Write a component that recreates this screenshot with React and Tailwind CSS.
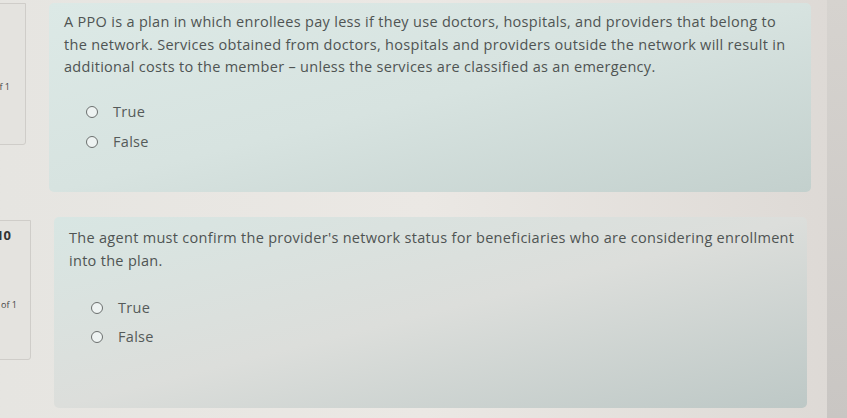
export default function App() {
  const font = { fontFamily: '"Open Sans", "Liberation Sans", sans-serif' };
  const Radio = ({ label }) => (
    <div className="flex items-center h-[30px]">
      <span className="w-[12px] h-[12px] rounded-full border-[1.5px] border-[#6b6f6e] bg-[#eef3f2]" />
      <span className="ml-[15px] text-[14.5px] tracking-[0.3px] text-[#555a59]">{label}</span>
    </div>
  );
  return (
    <div
      className="w-[847px] h-[418px] overflow-hidden relative bg-gradient-to-r from-[#e6e5e1] via-[#ebe8e4] to-[#ddd9d5]"
      style={font}
    >
      <div className="flex flex-col pt-[3px] gap-[25px]">
        {/* Question 9 */}
        <div className="flex items-start">
          <div className="w-[27px] h-[142px] ml-[-1px] border border-[#cfcdc9] bg-[#e4e3df] rounded-br-[3px] flex flex-col">
            <div className="h-[76px]" />
            <div className="text-[9px] text-[#444] -ml-[6px]">of 1</div>
          </div>
          <div className="ml-[23px] w-[762px] h-[189px] rounded-[5px] bg-gradient-to-br from-[#dce9e6] via-[#d7e3e0] to-[#c3d0cd] pl-[15px] pt-[8px]">
            <p className="text-[14.5px] tracking-[0.3px] leading-[22.5px] text-[#4f5453] whitespace-nowrap">
              A PPO is a plan in which enrollees pay less if they use doctors, hospitals, and providers that belong to<br />
              the network. Services obtained from doctors, hospitals and providers outside the network will result in<br />
              additional costs to the member – unless the services are classified as an emergency.
            </p>
            <div className="mt-[18px] ml-[22px] flex flex-col">
              <Radio label="True" />
              <Radio label="False" />
            </div>
          </div>
        </div>
        {/* Question 10 */}
        <div className="flex items-start">
          <div className="w-[32px] h-[140px] ml-[-1px] mt-[3px] border border-[#cfcdc9] bg-[#e4e3df] rounded-br-[3px] flex flex-col">
            <div className="text-[13px] font-bold text-[#333] leading-none mt-[8px] -ml-[4px]">10</div>
            <div className="text-[9px] text-[#444] mt-[56px] ml-[1px]">of 1</div>
          </div>
          <div className="ml-[23px] w-[753px] h-[191px] rounded-[5px] bg-gradient-to-br from-[#d8e6e3] via-[#dcdedb] to-[#bdc8c6] pl-[15px] pt-[9px]">
            <p className="text-[14.5px] tracking-[0.3px] leading-[23px] text-[#4f5453] whitespace-nowrap">
              The agent must confirm the provider's network status for beneficiaries who are considering enrollment<br />
              into the plan.
            </p>
            <div className="mt-[21px] ml-[22px] flex flex-col">
              <div className="h-[29px] flex items-center">
                <span className="w-[12px] h-[12px] rounded-full border-[1.5px] border-[#6b6f6e] bg-[#eef3f2]" />
                <span className="ml-[15px] text-[14.5px] tracking-[0.3px] text-[#555a59]">True</span>
              </div>
              <div className="h-[29px] flex items-center">
                <span className="w-[12px] h-[12px] rounded-full border-[1.5px] border-[#6b6f6e] bg-[#eef3f2]" />
                <span className="ml-[15px] text-[14.5px] tracking-[0.3px] text-[#555a59]">False</span>
              </div>
            </div>
          </div>
        </div>
      </div>
      <div className="absolute top-0 right-0 w-[20px] h-full bg-gradient-to-b from-[#d6d3cf] to-[#c9c6c3]" />
    </div>
  );
}
